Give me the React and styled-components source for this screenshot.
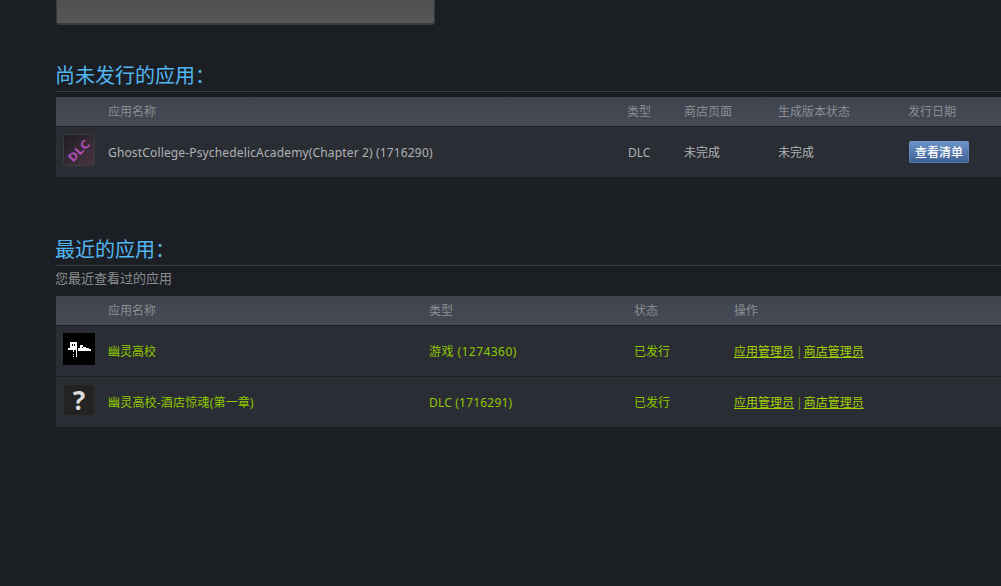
import React from "react";
import styled, { createGlobalStyle } from "styled-components";

const CJK = `"Noto Sans CJK SC", "Noto Sans", sans-serif`;

const Global = createGlobalStyle`
  html, body { margin: 0; padding: 0; background: #1b1e23; overflow: hidden; }
  body { font-family: "Noto Sans", "Noto Sans CJK SC", sans-serif; font-size: 12px; }
`;

const Page = styled.div`
  height: 586px;
  padding-left: 56px;
  box-sizing: border-box;
  overflow: hidden;
`;

const TopPanel = styled.div`
  width: 379px;
  height: 25px;
  box-sizing: border-box;
  background: linear-gradient(#4f4f50, #575757);
  border: 1px solid #38393b;
  border-top: 0;
  border-radius: 0 0 3px 3px;
  box-shadow: inset 0 -1px 0 #3a3a3a;
`;

const Section = styled.section`
  margin-top: ${(p) => p.$top}px;
`;

const Title = styled.h2`
  margin: 0;
  height: 29px;
  border-bottom: 1px solid #3c3e42;
  color: #52b6f1;
  font-family: ${CJK};
  font-size: 20px;
  font-weight: 400;
  line-height: 26px;
  text-indent: -1px;
`;

const Sub = styled.div`
  height: 30px;
  color: #8a8c8f;
  font-family: ${CJK};
  font-size: 13px;
  line-height: 24px;
  text-indent: -1px;
`;

const Gap = styled.div`
  height: 5px;
`;

const HeadRow = styled.div`
  display: grid;
  grid-template-columns: ${(p) => p.$cols};
  align-items: center;
  height: 27px;
  padding-bottom: 2px;
  background: linear-gradient(#3f444e, #454a54);
  border-bottom: 1px solid #1e2026;
  color: #8b8e92;
  font-family: ${CJK};
`;

const Row = styled.div`
  display: grid;
  box-sizing: border-box;
  grid-template-columns: ${(p) => p.$cols};
  align-items: center;
  height: 50px;
  background: #2a2d33;
  color: ${(p) => (p.$green ? "#90c800" : "#b0b2b5")};
  & + & {
    border-top: 1px solid #1f2127;
    height: 51px;
  }
`;

const Cell = styled.div`
  white-space: nowrap;
  padding: ${(p) => (p.$drop ? 1 : 0)}px 0 0 ${(p) => p.$indent || 0}px;
  letter-spacing: ${(p) => p.$track || 0}px;
`;

const IconCell = styled.div`
  align-self: start;
  padding: 7px 0 0 7px;
`;

const ButtonCell = styled.div`
  padding-left: 1px;
`;

const IconSvg = styled.svg`
  display: block;
  width: 32px;
  height: 32px;
`;

const UnknownIcon = styled.div`
  width: 32px;
  height: 32px;
  box-sizing: border-box;
  background: #232323;
  border: 1px solid #2d2d2d;
  border-radius: 2px;
  color: #dcdcdc;
  font-family: "Noto Sans", sans-serif;
  font-size: 26px;
  font-weight: 700;
  line-height: 30px;
  text-align: center;
`;

const ManifestButton = styled.button`
  display: block;
  width: 60px;
  height: 22px;
  padding: 0;
  border: 0;
  border-radius: 2px;
  background: linear-gradient(#6d95c9, #3e5f93);
  box-shadow: inset 0 0 0 1px rgba(120, 160, 210, 0.35);
  color: #fff;
  font-family: ${CJK};
  font-size: 12px;
  font-weight: 500;
  line-height: 22px;
`;

const Link = styled.a`
  color: #a4d007;
  text-decoration: underline;
`;

const Sep = styled.span`
  color: #6f9f10;
  margin: 0 1px 0 2px;
`;

const DlcIcon = () => (
  <IconSvg viewBox="0 0 32 32">
    <defs>
      <linearGradient id="dlcbg" x1="0" y1="0" x2="1" y2="1">
        <stop offset="0" stopColor="#1f1c20" />
        <stop offset="1" stopColor="#4a3546" />
      </linearGradient>
    </defs>
    <rect x="0.5" y="0.5" width="31" height="31" rx="2" fill="url(#dlcbg)" stroke="#3a3c40" />
    <text
      x="16"
      y="21"
      textAnchor="middle"
      fill="#a84fb0"
      fontFamily="DejaVu Sans, sans-serif"
      fontWeight="700"
      fontSize="11.5"
      transform="rotate(-45 16 17)"
    >
      DLC
    </text>
  </IconSvg>
);

const GhostIcon = () => (
  <IconSvg viewBox="0 0 32 32" shapeRendering="crispEdges">
    <rect width="32" height="32" fill="#000" />
    <path fill="#fff" d="M7 9h7v6H7zM5 15h9v2H5zM13 17h1v7h-1zM10 17h1v2h-1zM10 21h1v1h-1zM10 23h1v1h-1z" />
    <path fill="#000" d="M9 11h1v2H9zM11 11h1v2h-1z" />
    <path fill="#fff" d="M17 12h3v2h3v1h3v1h2v2H15v-3h2z" />
    <path fill="#000" d="M19 14h1v1h-1z" />
  </IconSvg>
);

const COLS_A = "52px 519px 57px 94px 130px 1fr";
const COLS_B = "52px 321px 205px 100px 1fr";

const Managers = () => (
  <Cell>
    <Link>应用管理员</Link>
    <Sep>|</Sep>
    <Link>商店管理员</Link>
  </Cell>
);

export default function App() {
  return (
    <Page>
      <Global />
      <TopPanel />
      <Section $top={37}>
        <Title>尚未发行的应用：</Title>
        <Gap />
        <HeadRow $cols={COLS_A}>
          <span />
          <span>应用名称</span>
          <span>类型</span>
          <span>商店页面</span>
          <span>生成版本状态</span>
          <span>发行日期</span>
        </HeadRow>
        <Row $cols={COLS_A}>
          <IconCell><DlcIcon /></IconCell>
          <Cell $drop $track={0.15}>GhostCollege-PsychedelicAcademy(Chapter 2) (1716290)</Cell>
          <Cell $drop $indent={1}>DLC</Cell>
          <Cell>未完成</Cell>
          <Cell>未完成</Cell>
          <ButtonCell><ManifestButton>查看清单</ManifestButton></ButtonCell>
        </Row>
      </Section>
      <Section $top={59}>
        <Title>最近的应用：</Title>
        <Sub>您最近查看过的应用</Sub>
        <HeadRow $cols={COLS_B}>
          <span />
          <span>应用名称</span>
          <span>类型</span>
          <span>状态</span>
          <span>操作</span>
        </HeadRow>
        <Row $cols={COLS_B} $green>
          <IconCell><GhostIcon /></IconCell>
          <Cell>幽灵高校</Cell>
          <Cell $track={0.45}>游戏 (1274360)</Cell>
          <Cell>已发行</Cell>
          <Managers />
        </Row>
        <Row $cols={COLS_B} $green>
          <IconCell><UnknownIcon>?</UnknownIcon></IconCell>
          <Cell $track={0.2}>幽灵高校-酒店惊魂(第一章)</Cell>
          <Cell $track={0.2}>DLC (1716291)</Cell>
          <Cell>已发行</Cell>
          <Managers />
        </Row>
      </Section>
    </Page>
  );
}
